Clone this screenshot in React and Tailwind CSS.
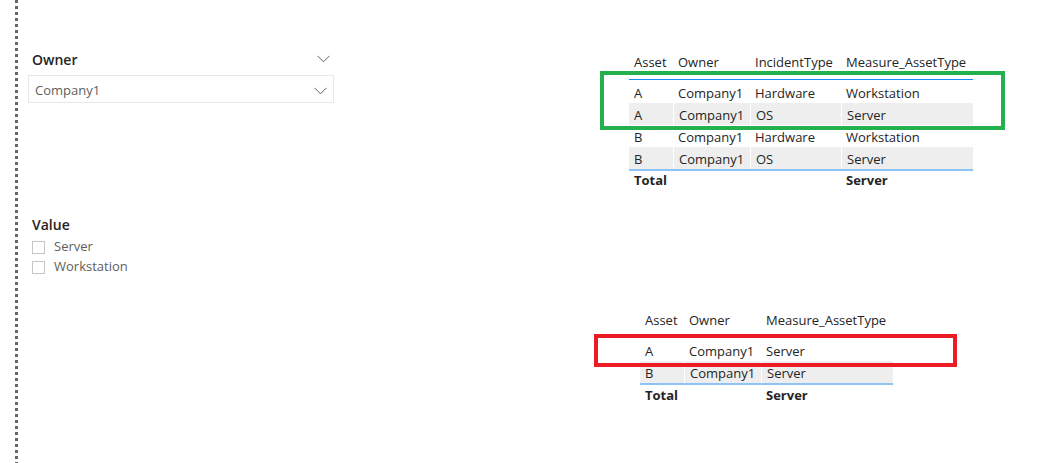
function Chevron({ className = "" }) {
  return (
    <svg className={className} width="13" height="8" viewBox="0 0 13 8" fill="none">
      <path d="M0.5 0.8 L6.5 6.8 L12.5 0.8" stroke="#605e5c" strokeWidth="1" />
    </svg>
  );
}

function Row({ cells, widths, gray, bold, boldLead = "leading-[18px]" }) {
  return (
    <div className={`flex h-[22px] ${gray ? "bg-[#eeeeee]" : ""}`}>
      {cells.map((c, i) => (
        <div
          key={i}
          style={{ width: widths[i] }}
          className={`h-full pl-[5px] whitespace-nowrap ${bold ? `font-bold ${boldLead}` : "leading-[24px]"} ${i > 0 && gray ? "border-l border-white" : ""}`}
        >
          {c}
        </div>
      ))}
    </div>
  );
}

function Table({ headers, rows, total, widths, topLine = true, boldLead }) {
  const full = widths.reduce((a, b) => a + b, 0);
  return (
    <div style={{ width: full }} className="flex flex-col text-[13px] text-[#252423]">
      <div className="flex h-[28px] items-start">
        {headers.map((h, i) => (
          <div key={i} style={{ width: widths[i] }} className="pl-[5px] leading-[22px] whitespace-nowrap">
            {h}
          </div>
        ))}
      </div>
      <div className={`h-px ${topLine ? "bg-[#118dff]" : "bg-transparent"}`} />
      <div className="h-px" />
      {rows.map((r, i) => (
        <Row key={i} cells={r} widths={widths} gray={i % 2 === 1} />
      ))}
      <div className="h-[2px] bg-[#8cc4f5]" />
      <Row cells={total} widths={widths} bold boldLead={boldLead} />
    </div>
  );
}

export default function App() {
  return (
    <div className="relative w-[1044px] h-[463px] bg-white flex overflow-hidden font-['Open_Sans','Noto_Sans',sans-serif] text-[#252423]">
      <div className="ml-[15px] w-[3px] h-full shrink-0 bg-[repeating-linear-gradient(to_bottom,#666666_0px,#666666_3px,transparent_3px,transparent_6px)]" />

      <div className="ml-[10px] w-[306px] shrink-0 flex flex-col">
        <div className="mt-[49px] h-[20px] pl-[4px] pr-[4px] flex items-center justify-between">
          <span className="text-[14px] font-semibold text-[#252423]">Owner</span>
          <Chevron />
        </div>
        <div className="mt-[6px] h-[28px] border border-[#e8e8e8] flex items-center justify-between pl-[6px] pr-[6px] pt-[3px]">
          <span className="text-[13px] text-[#605e5c]">Company1</span>
          <Chevron />
        </div>

        <div className="mt-[111px] h-[20px] pl-[4px] flex items-center">
          <span className="text-[14px] font-semibold text-[#252423]">Value</span>
        </div>
        <div className="mt-[3px] flex flex-col">
          {["Server", "Workstation"].map((v) => (
            <div key={v} className="h-[20px] pl-[4px] flex items-center gap-[9px]">
              <div className="w-[13px] h-[13px] border border-[#c8c6c4] bg-white" />
              <span className="text-[13px] text-[#605e5c]">{v}</span>
            </div>
          ))}
        </div>
      </div>

      <div className="ml-[295px] flex flex-col">
        <div className="mt-[51px]">
          <Table
            headers={["Asset", "Owner", "IncidentType", "Measure_AssetType"]}
            widths={[44, 77, 91, 132]}
            rows={[
              ["A", "Company1", "Hardware", "Workstation"],
              ["A", "Company1", "OS", "Server"],
              ["B", "Company1", "Hardware", "Workstation"],
              ["B", "Company1", "OS", "Server"],
            ]}
            total={["Total", "", "", "Server"]}
          />
        </div>
        <div className="mt-[116px] ml-[11px]">
          <Table
            headers={["Asset", "Owner", "Measure_AssetType"]}
            widths={[44, 77, 132]}
            rows={[
              ["A", "Company1", "Server"],
              ["B", "Company1", "Server"],
            ]}
            total={["Total", "", "Server"]}
            topLine={false}
            boldLead="leading-[20px]"
          />
        </div>
      </div>

      <div className="absolute left-[600px] top-[71px] w-[405px] h-[59px] border-4 border-[#22b14c]" />
      <div className="absolute left-[594px] top-[334px] w-[363px] h-[33px] border-4 border-[#ed1c24]" />
    </div>
  );
}
